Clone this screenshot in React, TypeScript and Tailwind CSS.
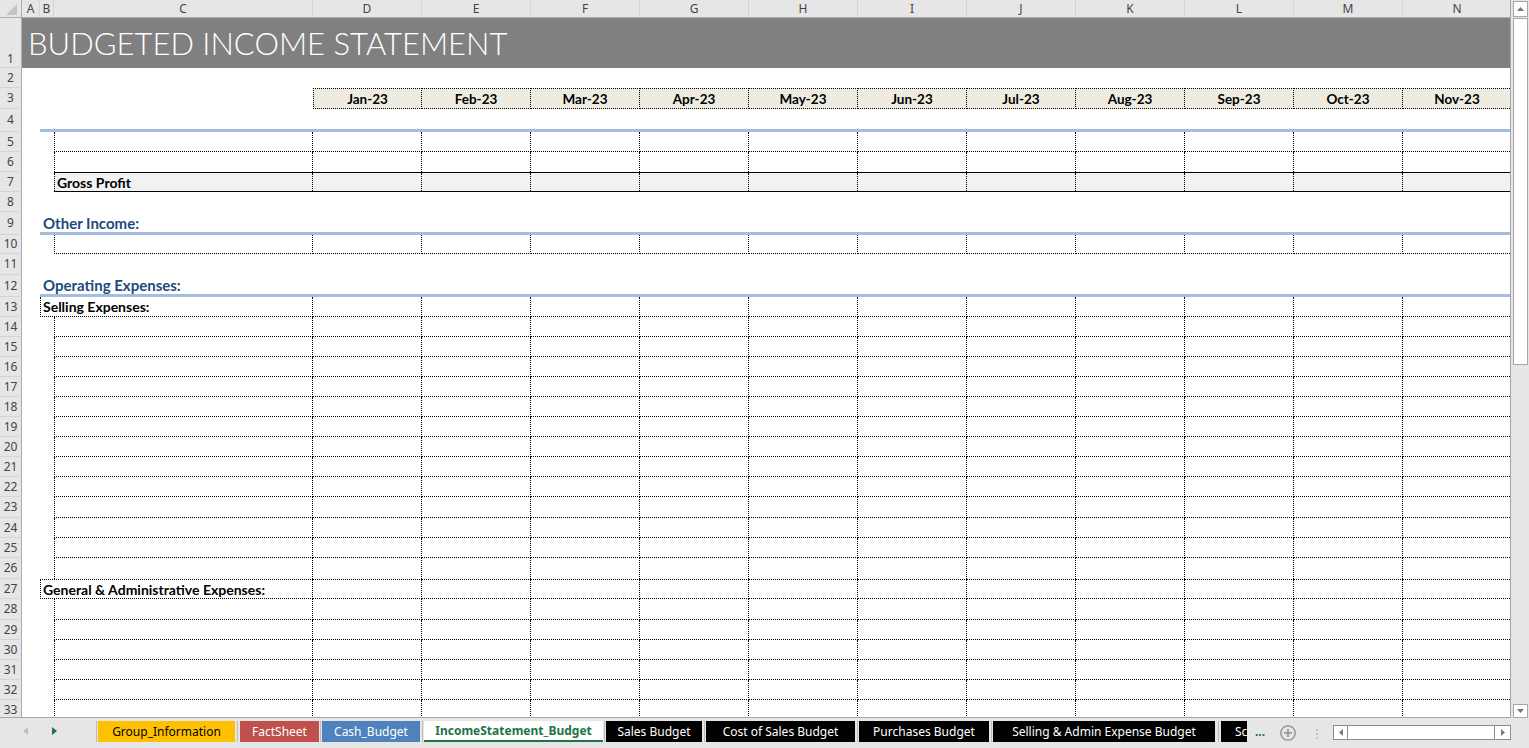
import React from 'react';

const MONTHS = ['Jan-23', 'Feb-23', 'Mar-23', 'Apr-23', 'May-23', 'Jun-23', 'Jul-23', 'Aug-23', 'Sep-23', 'Oct-23', 'Nov-23'];
const COLS = ['D', 'E', 'F', 'G', 'H', 'I', 'J', 'K', 'L', 'M', 'N'];

type Kind = 'title' | 'blank' | 'months' | 'blue' | 'data' | 'dataOpen' | 'gross' | 'boxed' | 'boxedTop';
interface RowDef { n: number; h: string; kind: Kind; text?: string }

const rows: RowDef[] = [
  { n: 1, h: 'h-[50px]', kind: 'title' },
  { n: 2, h: 'h-[20px]', kind: 'blank' },
  { n: 3, h: 'h-[21px]', kind: 'months' },
  { n: 4, h: 'h-[23px]', kind: 'blue' },
  { n: 5, h: 'h-[20px]', kind: 'data' },
  { n: 6, h: 'h-[20px]', kind: 'dataOpen' },
  { n: 7, h: 'h-[20px]', kind: 'gross', text: 'Gross Profit' },
  { n: 8, h: 'h-[20px]', kind: 'blank' },
  { n: 9, h: 'h-[23px]', kind: 'blue', text: 'Other Income:' },
  { n: 10, h: 'h-[19px]', kind: 'data' },
  { n: 11, h: 'h-[21px]', kind: 'blank' },
  { n: 12, h: 'h-[22px]', kind: 'blue', text: 'Operating Expenses:' },
  { n: 13, h: 'h-[20px]', kind: 'boxed', text: 'Selling Expenses:' },
  { n: 14, h: 'h-[20px]', kind: 'data' },
  { n: 15, h: 'h-[20px]', kind: 'data' },
  { n: 16, h: 'h-[20px]', kind: 'data' },
  { n: 17, h: 'h-[20px]', kind: 'data' },
  { n: 18, h: 'h-[20px]', kind: 'data' },
  { n: 19, h: 'h-[20px]', kind: 'data' },
  { n: 20, h: 'h-[20px]', kind: 'data' },
  { n: 21, h: 'h-[20px]', kind: 'data' },
  { n: 22, h: 'h-[20px]', kind: 'data' },
  { n: 23, h: 'h-[21px]', kind: 'data' },
  { n: 24, h: 'h-[20px]', kind: 'data' },
  { n: 25, h: 'h-[20px]', kind: 'data' },
  { n: 26, h: 'h-[21px]', kind: 'dataOpen' },
  { n: 27, h: 'h-[20px]', kind: 'boxedTop', text: 'General & Administrative Expenses:' },
  { n: 28, h: 'h-[21px]', kind: 'data' },
  { n: 29, h: 'h-[20px]', kind: 'data' },
  { n: 30, h: 'h-[20px]', kind: 'data' },
  { n: 31, h: 'h-[20px]', kind: 'data' },
  { n: 32, h: 'h-[20px]', kind: 'data' },
  { n: 33, h: 'h-[20px]', kind: 'data' },
];

function RowNum({ n, tall }: { n: number; tall: boolean }) {
  return (
    <div
      className={`w-[22px] shrink-0 h-full bg-[#e6e6e6] border-r border-b border-r-[#ababab] border-b-[#d4d4d4] flex justify-center text-[12px] leading-none text-[#444] font-['Noto_Sans',sans-serif] ${tall ? 'items-end pb-[2px]' : 'items-center'}`}
    >
      {n}
    </div>
  );
}

function Spacers({ b = true }: { b?: boolean }) {
  return (
    <>
      <div className="w-[18px] shrink-0" />
      {b && <div className="w-[14px] shrink-0" />}
    </>
  );
}

function Body({ r }: { r: RowDef }) {
  switch (r.kind) {
    case 'title':
      return (
        <div className="flex-1 bg-[#808080] flex items-center pl-[6px] pt-[1px] text-white text-[31px] font-light leading-none whitespace-nowrap">
          BUDGETED INCOME STATEMENT
        </div>
      );
    case 'blank':
      return <div className="flex-1" />;
    case 'months':
      return (
        <>
          <Spacers />
          <div className="w-[259px] shrink-0" />
          {MONTHS.map((m, i) => (
            <div
              key={m}
              className={`w-[109px] shrink-0 bg-[#eeece1] border-t border-b border-r border-dotted border-black flex items-center justify-center pt-[2px] text-[13.5px] font-bold leading-none ${i === 0 ? 'border-l' : ''}`}
            >
              {m}
            </div>
          ))}
        </>
      );
    case 'blue':
      return (
        <>
          <Spacers b={false} />
          <div className="flex-1 border-b-[3px] border-[#a4bddd] flex items-end pl-[3px] text-[15px] font-bold leading-[18px] text-[#1f497d] whitespace-nowrap">
            {r.text}
          </div>
        </>
      );
    case 'data':
      return (
        <>
          <Spacers />
          <div className="w-[259px] shrink-0 border-l border-r border-b border-dotted border-black" />
          {COLS.map((c) => (
            <div key={c} className="w-[109px] shrink-0 border-r border-b border-dotted border-black" />
          ))}
        </>
      );
    case 'dataOpen':
      return (
        <>
          <Spacers />
          <div className="w-[259px] shrink-0 border-l border-r border-dotted border-black" />
          {COLS.map((c) => (
            <div key={c} className="w-[109px] shrink-0 border-r border-dotted border-black" />
          ))}
        </>
      );
    case 'gross':
      return (
        <>
          <Spacers />
          <div className="flex-1 flex bg-[#f2f2f2] border-y border-black">
            <div className="w-[259px] shrink-0 border-l border-r border-dotted border-black flex items-center pl-[2px] pt-[2px] text-[14px] font-bold leading-none whitespace-nowrap">
              {r.text}
            </div>
            {COLS.map((c) => (
              <div key={c} className="w-[109px] shrink-0 border-r border-dotted border-black" />
            ))}
          </div>
        </>
      );
    case 'boxed':
      return (
        <>
          <Spacers b={false} />
          <div className="w-[273px] shrink-0 border-l border-r border-b border-dotted border-black flex items-center pl-[2px] pt-[1px] text-[14px] font-bold leading-none whitespace-nowrap">
            {r.text}
          </div>
          {COLS.map((c) => (
            <div key={c} className="w-[109px] shrink-0 border-r border-b border-dotted border-black" />
          ))}
        </>
      );
    case 'boxedTop':
      return (
        <>
          <Spacers b={false} />
          <div className="w-[273px] shrink-0 border-l border-r border-t border-b border-dotted border-black flex items-center pl-[2px] pt-[1px] text-[14px] font-bold leading-none whitespace-nowrap">
            {r.text}
          </div>
          {COLS.map((c) => (
            <div key={c} className="w-[109px] shrink-0 border-r border-t border-b border-dotted border-black" />
          ))}
        </>
      );
  }
}

function ColumnHeader() {
  const hdr = 'shrink-0 h-full border-r border-b border-r-[#d4d4d4] border-b-[#ababab] flex items-center justify-center';
  return (
    <div className="flex h-[18px] bg-[#e6e6e6] text-[12px] leading-none text-[#444] font-['Noto_Sans',sans-serif]">
      <div className="w-[22px] shrink-0 h-full border-r border-b border-r-[#ababab] border-b-[#ababab] flex items-end justify-end pr-[4px] pb-[2px]">
        <svg width="11" height="11" viewBox="0 0 11 11">
          <path d="M11 0 L11 11 L0 11 Z" fill="#c4c4c4" />
        </svg>
      </div>
      <div className={`w-[18px] ${hdr}`}>A</div>
      <div className={`w-[14px] ${hdr}`}>B</div>
      <div className={`w-[259px] ${hdr}`}>C</div>
      {COLS.map((c) => (
        <div key={c} className={`w-[109px] ${hdr}`}>
          {c}
        </div>
      ))}
    </div>
  );
}

function VScroll() {
  return (
    <div className="w-[18px] h-[718px] bg-[#e6e6e6] flex flex-col items-end pr-[1px] pt-[1px]">
      <div className="w-[15px] h-[16px] border border-[#a6a6a6] bg-white flex items-center justify-center">
        <svg width="7" height="4" viewBox="0 0 7 4">
          <path d="M0 4 L3.5 0 L7 4 Z" fill="#777" />
        </svg>
      </div>
      <div className="w-[15px] h-[347px] mt-[1px] border border-[#a6a6a6] bg-white" />
      <div className="flex-1" />
      <div className="w-[15px] h-[14px] border border-[#a6a6a6] bg-white flex items-center justify-center">
        <svg width="7" height="4" viewBox="0 0 7 4">
          <path d="M0 0 L3.5 4 L7 0 Z" fill="#777" />
        </svg>
      </div>
    </div>
  );
}

function Sep({ w }: { w: string }) {
  return (
    <div className={`${w} shrink-0 h-[21px] flex justify-center`}>
      <div className="w-px h-full bg-[#bcbcbc]" />
    </div>
  );
}

function TabBar() {
  const tab = 'shrink-0 h-[21px] flex items-center justify-center whitespace-nowrap leading-none';
  return (
    <div className="h-[30px] bg-[#e6e6e6] flex items-start text-[12px] font-['Noto_Sans',sans-serif]">
      <div className="w-[96px] h-[30px] flex items-start pt-[9px] shrink-0">
        <svg className="ml-[23px]" width="5" height="8" viewBox="0 0 5 8">
          <path d="M5 0 L0 4 L5 8 Z" fill="#c0c0c0" />
        </svg>
        <svg className="ml-[24px]" width="5" height="8" viewBox="0 0 5 8">
          <path d="M0 0 L5 4 L0 8 Z" fill="#217346" />
        </svg>
      </div>
      <div className="w-px h-[21px] mt-[3px] bg-[#bcbcbc] shrink-0" />
      <div className="ml-[1px] w-[1149px] shrink-0 h-[30px] overflow-hidden flex items-start pt-[3px]">
        <div className={`${tab} w-[137px] bg-[#ffc000] text-black`}>Group_Information</div>
        <Sep w="w-[5px]" />
        <div className={`${tab} w-[79px] bg-[#c0504d] text-white`}>FactSheet</div>
        <Sep w="w-[3px]" />
        <div className={`${tab} w-[98px] bg-[#4f81bd] text-white`}>Cash_Budget</div>
        <Sep w="w-[4px]" />
        <div className={`${tab} w-[179px] bg-white text-[#217346] font-bold border-b-2 border-[#217346]`}>IncomeStatement_Budget</div>
        <Sep w="w-[3px]" />
        <div className={`${tab} w-[96px] bg-black text-white`}>Sales Budget</div>
        <Sep w="w-[4px]" />
        <div className={`${tab} w-[149px] bg-black text-white`}>Cost of Sales Budget</div>
        <Sep w="w-[4px]" />
        <div className={`${tab} w-[130px] bg-black text-white`}>Purchases Budget</div>
        <Sep w="w-[4px]" />
        <div className={`${tab} w-[222px] bg-black text-white`}>Selling &amp; Admin Expense Budget</div>
        <Sep w="w-[6px]" />
        <div className={`${tab} w-[40px] bg-black text-white justify-start pl-[14px]`}>Sc</div>
      </div>
      <div className="w-[33px] shrink-0 h-[30px] flex items-start pt-[8px] pl-[8px] text-[#217346] font-bold text-[12px] leading-none">...</div>
      <svg className="mt-[7px] shrink-0" width="16" height="16" viewBox="0 0 16 16">
        <circle cx="8" cy="8" r="7.2" fill="none" stroke="#8a8a8a" strokeWidth="1.3" />
        <path d="M8 4 V12 M4 8 H12" stroke="#8a8a8a" strokeWidth="1.4" />
      </svg>
      <svg className="ml-[20px] mt-[11px] shrink-0" width="2" height="10" viewBox="0 0 2 10">
        <rect x="0" y="0" width="2" height="2" fill="#c4c4c4" />
        <rect x="0" y="4" width="2" height="2" fill="#c4c4c4" />
        <rect x="0" y="8" width="2" height="2" fill="#c4c4c4" />
      </svg>
      <div className="ml-[15px] mt-[7px] w-[178px] h-[15px] shrink-0 flex">
        <div className="w-[15px] h-full border border-[#8c8c8c] bg-white flex items-center justify-center">
          <svg width="4" height="7" viewBox="0 0 4 7">
            <path d="M4 0 L0 3.5 L4 7 Z" fill="#777" />
          </svg>
        </div>
        <div className="flex-1 h-full border-y border-[#8c8c8c] bg-white" />
        <div className="w-[17px] h-full border border-[#8c8c8c] bg-white flex items-center justify-center">
          <svg width="4" height="7" viewBox="0 0 4 7">
            <path d="M0 0 L4 3.5 L0 7 Z" fill="#777" />
          </svg>
        </div>
      </div>
    </div>
  );
}

export default function App() {
  return (
    <div className="w-[1529px] h-[748px] overflow-hidden bg-white font-['Lato',sans-serif] text-black">
      <div className="flex h-[718px]">
        <div className="w-[1511px] h-[718px] shrink-0 overflow-hidden border-r border-b border-[#a6a6a6] bg-white">
          <ColumnHeader />
          {rows.map((r) => (
            <div key={r.n} className={`flex ${r.h}`}>
              <RowNum n={r.n} tall={r.kind === 'title'} />
              <Body r={r} />
            </div>
          ))}
        </div>
        <VScroll />
      </div>
      <TabBar />
    </div>
  );
}
